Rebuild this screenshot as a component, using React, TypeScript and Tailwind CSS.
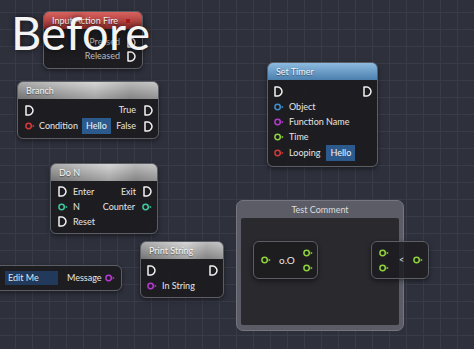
import type { ReactNode } from "react";

const font = "font-['Lato','Open_Sans',sans-serif]";

function ExecPin({ className = "" }: { className?: string }) {
  return (
    <svg width="9" height="11" viewBox="0 0 9 11" className={`shrink-0 ${className}`}>
      <path
        d="M1 1 H4 C6 1 8 3.6 8 5.5 C8 7.4 6 10 4 10 H1 Z"
        fill="none"
        stroke="#f2f2f2"
        strokeWidth="1.5"
        strokeLinejoin="round"
      />
    </svg>
  );
}

function DataPin({ color, className = "" }: { color: string; className?: string }) {
  return (
    <svg width="10" height="8" viewBox="0 0 10 8" className={`shrink-0 ${className}`}>
      <circle cx="3.6" cy="4" r="2.7" fill="none" stroke={color} strokeWidth="1.5" />
      <path d="M7.6 2.6 L9.6 4 L7.6 5.4 Z" fill={color} />
    </svg>
  );
}

function Hello() {
  return (
    <span className="flex h-[16px] items-center bg-[#2d5a8c] px-[4px] text-[#f4f4f4]">Hello</span>
  );
}

const headers = {
  gray: "bg-[linear-gradient(180deg,rgba(255,255,255,0.25),rgba(0,0,0,0.2)),linear-gradient(90deg,#8f8f8f,#c9c9c9_55%,#a3a3a3_80%,#b5b5b5)]",
  blue: "bg-[linear-gradient(180deg,#8dbbe0,#4b7fae)]",
  red: "bg-[linear-gradient(180deg,#d9625e,#8f2b2b)]",
};

function Node({
  className,
  title,
  tone = "gray",
  children,
  right,
}: {
  className: string;
  title?: string;
  tone?: keyof typeof headers;
  children: ReactNode;
  right?: ReactNode;
}) {
  return (
    <div
      className={`absolute overflow-hidden rounded-[6px] border border-[#5c5e66] bg-[#1c1c20]/95 text-[9px] text-[#e6e6e6] shadow-[0_2px_5px_rgba(0,0,0,0.45)] ${font} ${className}`}
    >
      {title ? (
        <div
          className={`flex h-[17px] items-center justify-between pl-[8px] pr-[12px] text-[#f3f3f3] [text-shadow:0_1px_1px_rgba(0,0,0,0.45)] ${headers[tone]}`}
        >
          <span>{title}</span>
          {right}
        </div>
      ) : null}
      {children}
    </div>
  );
}

export default function App() {
  return (
    <div
      className={`relative h-[349px] w-[474px] overflow-hidden bg-[#2e303c] bg-[linear-gradient(to_right,#393b49_1px,transparent_1px),linear-gradient(to_bottom,#393b49_1px,transparent_1px)] bg-[size:17px_17px] bg-[position:-2px_-5px] ${font}`}
    >
      {/* Input Action Fire */}
      <Node
        className="left-[43px] top-[11px] w-[100px]"
        title="Input Action Fire"
        tone="red"
        right={<span className="h-[4px] w-[4px] bg-[#b01818]" />}
      >
        <div className="flex flex-col items-end pb-[5px] pr-[6px] pt-[6px] text-[#bdbdbd]">
          <div className="flex h-[14px] items-center gap-[7px]">
            <span>Pressed</span>
            <ExecPin />
          </div>
          <div className="flex h-[14px] items-center gap-[7px]">
            <span>Released</span>
            <ExecPin />
          </div>
        </div>
      </Node>

      <div className="absolute left-[11px] top-[9px] text-[47px] leading-none tracking-[0.005em] text-[#f4f4f4] [text-shadow:0_0_6px_rgba(0,0,0,0.7)]">
        Before
      </div>

      {/* Branch */}
      <Node className="left-[17px] top-[81px] w-[142px]" title="Branch">
        <div className="flex flex-col pb-[4px] pl-[7px] pr-[5px] pt-[3px]">
          <div className="flex h-[16px] items-center justify-between">
            <ExecPin />
            <div className="flex items-center gap-[8px]">
              <span>True</span>
              <ExecPin />
            </div>
          </div>
          <div className="flex h-[16px] items-center justify-between">
            <div className="flex items-center gap-[4px]">
              <DataPin color="#d43a3a" />
              <span>Condition</span>
              <Hello />
            </div>
            <div className="flex items-center gap-[8px]">
              <span>False</span>
              <ExecPin />
            </div>
          </div>
        </div>
      </Node>

      {/* Set Timer */}
      <Node className="left-[267px] top-[62px] w-[111px]" title="Set Timer" tone="blue">
        <div className="flex flex-col pb-[5px] pl-[6px] pr-[5px] pt-[4px]">
          <div className="flex h-[15px] items-center justify-between">
            <ExecPin />
            <ExecPin />
          </div>
          <div className="flex h-[15px] items-center gap-[5px]">
            <DataPin color="#3d8fd0" />
            <span>Object</span>
          </div>
          <div className="flex h-[15px] items-center gap-[5px]">
            <DataPin color="#b63ad0" />
            <span>Function Name</span>
          </div>
          <div className="flex h-[15px] items-center gap-[5px]">
            <DataPin color="#8fd13c" />
            <span>Time</span>
          </div>
          <div className="flex h-[17px] items-center gap-[5px]">
            <DataPin color="#d43a3a" />
            <span className="mr-[1px]">Looping</span>
            <Hello />
          </div>
        </div>
      </Node>

      {/* Do N */}
      <Node className="left-[50px] top-[163px] w-[108px]" title="Do N">
        <div className="flex flex-col pb-[4px] pl-[7px] pr-[5px] pt-[3px]">
          <div className="flex h-[15px] items-center justify-between">
            <div className="flex items-center gap-[6px]">
              <ExecPin />
              <span>Enter</span>
            </div>
            <div className="flex items-center gap-[7px]">
              <span>Exit</span>
              <ExecPin />
            </div>
          </div>
          <div className="flex h-[15px] items-center justify-between">
            <div className="flex items-center gap-[5px]">
              <DataPin color="#3fc99a" />
              <span>N</span>
            </div>
            <div className="flex items-center gap-[7px]">
              <span>Counter</span>
              <DataPin color="#3fc99a" />
            </div>
          </div>
          <div className="flex h-[15px] items-center gap-[6px]">
            <ExecPin />
            <span>Reset</span>
          </div>
        </div>
      </Node>

      {/* Edit Me */}
      <Node className="left-[-10px] top-[265px] w-[132px]">
        <div className="flex h-[24px] items-center pl-[14px] pr-[6px]">
          <span className="flex h-[14px] w-[53px] items-center bg-[#21395a] pl-[3px] text-[#dfe6ee]">Edit Me</span>
          <span className="ml-[9px]">Message</span>
          <DataPin color="#b63ad0" className="ml-auto" />
        </div>
      </Node>

      {/* Print String */}
      <Node className="left-[140px] top-[241px] w-[84px]" title="Print String">
        <div className="flex flex-col pb-[3px] pl-[6px] pr-[5px] pt-[3px]">
          <div className="flex h-[16px] items-center justify-between">
            <ExecPin />
            <ExecPin />
          </div>
          <div className="flex h-[16px] items-center gap-[5px]">
            <DataPin color="#b63ad0" />
            <span>In String</span>
          </div>
        </div>
      </Node>

      {/* Test Comment */}
      <div
        className={`absolute left-[236px] top-[200px] flex h-[131px] w-[168px] flex-col rounded-[7px] border border-[#74757e] bg-[#5b5c66] px-[4px] pb-[5px] ${font}`}
      >
        <div className="flex h-[17px] items-center justify-center text-[9px] text-[#dcdcdc]">Test Comment</div>
        <div className="flex-1 rounded-[2px] bg-[#29292e]" />
      </div>

      {/* o.O */}
      <Node className="left-[253px] top-[241px] h-[38px] w-[65px]">
        <div className="flex h-full items-center pl-[7px] pr-[4px]">
          <DataPin color="#8fd13c" />
          <span className="ml-[8px] text-[10px]">o.O</span>
          <div className="ml-auto flex flex-col gap-[7px]">
            <DataPin color="#8fd13c" />
            <DataPin color="#8fd13c" />
          </div>
        </div>
      </Node>

      {/* < */}
      <Node className="left-[371px] top-[241px] h-[38px] w-[58px] !bg-[#1c1c20]/85">
        <div className="flex h-full items-center pl-[7px] pr-[5px]">
          <div className="flex flex-col gap-[7px]">
            <DataPin color="#8fd13c" />
            <DataPin color="#8fd13c" />
          </div>
          <span className="ml-[10px]">&lt;</span>
          <DataPin color="#8fd13c" className="ml-auto" />
        </div>
      </Node>
    </div>
  );
}
